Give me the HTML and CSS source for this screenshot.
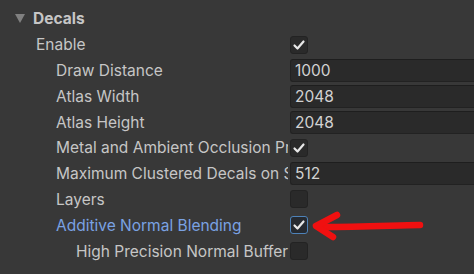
FILE: index.html
```html
<!DOCTYPE html>
<html>
<head>
<meta charset="utf-8">
<link rel="stylesheet" href="styles.css">
</head>
<body>
<div class="panel">
  <div class="row header">
    <div class="label l0"><span class="tri"></span><span class="title">Decals</span></div>
  </div>
  <div class="row">
    <div class="label l1">Enable</div>
    <div class="value"><span class="cb on"><svg viewBox="0 0 18 18"><path d="M4.5 9.5 L7.5 12.5 L13.5 5.5"/></svg></span></div>
  </div>
  <div class="row">
    <div class="label l2">Draw Distance</div>
    <div class="value"><div class="field">1000</div></div>
  </div>
  <div class="row">
    <div class="label l2">Atlas Width</div>
    <div class="value"><div class="field">2048</div></div>
  </div>
  <div class="row">
    <div class="label l2">Atlas Height</div>
    <div class="value"><div class="field">2048</div></div>
  </div>
  <div class="row">
    <div class="label l2">Metal and Ambient Occlusion Properties</div>
    <div class="value"><span class="cb on"><svg viewBox="0 0 18 18"><path d="M4.5 9.5 L7.5 12.5 L13.5 5.5"/></svg></span></div>
  </div>
  <div class="row">
    <div class="label l2">Maximum Clustered Decals on Screen</div>
    <div class="value"><div class="field">512</div></div>
  </div>
  <div class="row">
    <div class="label l2">Layers</div>
    <div class="value"><span class="cb"></span></div>
  </div>
  <div class="row">
    <div class="label l2 blue">Additive Normal Blending</div>
    <div class="value"><span class="cb on focus"><svg viewBox="0 0 18 18"><path d="M4.5 9.5 L7.5 12.5 L13.5 5.5"/></svg></span>
      <svg class="arrow" viewBox="0 0 120 40" width="120" height="40"><path d="M108 21 C 80 21.5, 50 23, 10 23"/><path d="M25 11 L4 22 L21 33"/></svg>
    </div>
  </div>
  <div class="row">
    <div class="label l3">High Precision Normal Buffer</div>
    <div class="value"><span class="cb"></span></div>
  </div>
</div>
</body>
</html>
```
FILE: styles.css
```css
html, body {
  margin: 0;
  padding: 0;
  background: #383838;
  width: 474px;
  height: 274px;
  overflow: hidden;
}
.panel {
  padding-top: 6px;
  font-family: Inter, "Noto Sans", sans-serif;
  font-size: 15.5px;
  color: #c6c6c6;
}
.row {
  display: flex;
  align-items: center;
  height: 25.8px;
}
.label {
  width: 290px;
  flex: none;
  white-space: nowrap;
  overflow: hidden;
  box-sizing: border-box;
}
.l0 { padding-left: 15px; display: flex; align-items: center; }
.l1 { padding-left: 36px; }
.l2 { padding-left: 56px; }
.l3 { padding-left: 76px; }
.label.l2 { width: 288px; margin-right: 2px; }
.blue { color: #7aa2e3; }
.tri {
  width: 0; height: 0;
  border-left: 5.5px solid transparent;
  border-right: 5.5px solid transparent;
  border-top: 9px solid #808080;
  margin-right: 8px;
  margin-top: 0px;
}
.title { font-weight: 700; }
.value {
  flex: 1;
  display: flex;
  align-items: center;
  position: relative;
  min-width: 0;
}
.cb {
  width: 18px;
  height: 18px;
  box-sizing: border-box;
  background: #2a2a2a;
  border: 1px solid #232323;
  border-radius: 3px;
  display: flex;
  align-items: center;
  justify-content: center;
}
.cb svg { width: 18px; height: 18px; flex: none; }
.cb svg path { fill: none; stroke: #e8e8e8; stroke-width: 2.2; stroke-linecap: round; stroke-linejoin: round; }
.cb.focus { border: 1px solid #4e82b8; background: #262a30; }
.field {
  flex: 1;
  height: 23px;
  box-sizing: border-box;
  background: #2a2a2a;
  border: 1px solid #222;
  border-top-color: #1e1e1e;
  border-radius: 3px 0 0 3px;
  border-right: none;
  padding-left: 4px;
  line-height: 21px;
  color: #d2d2d2;
  margin-right: -4px;
}
.arrow {
  position: absolute;
  left: 22px;
  top: -12px;
  overflow: visible;
}
.arrow path { fill: none; stroke: #f01010; stroke-width: 6.5; stroke-linecap: round; stroke-linejoin: round; }
```
